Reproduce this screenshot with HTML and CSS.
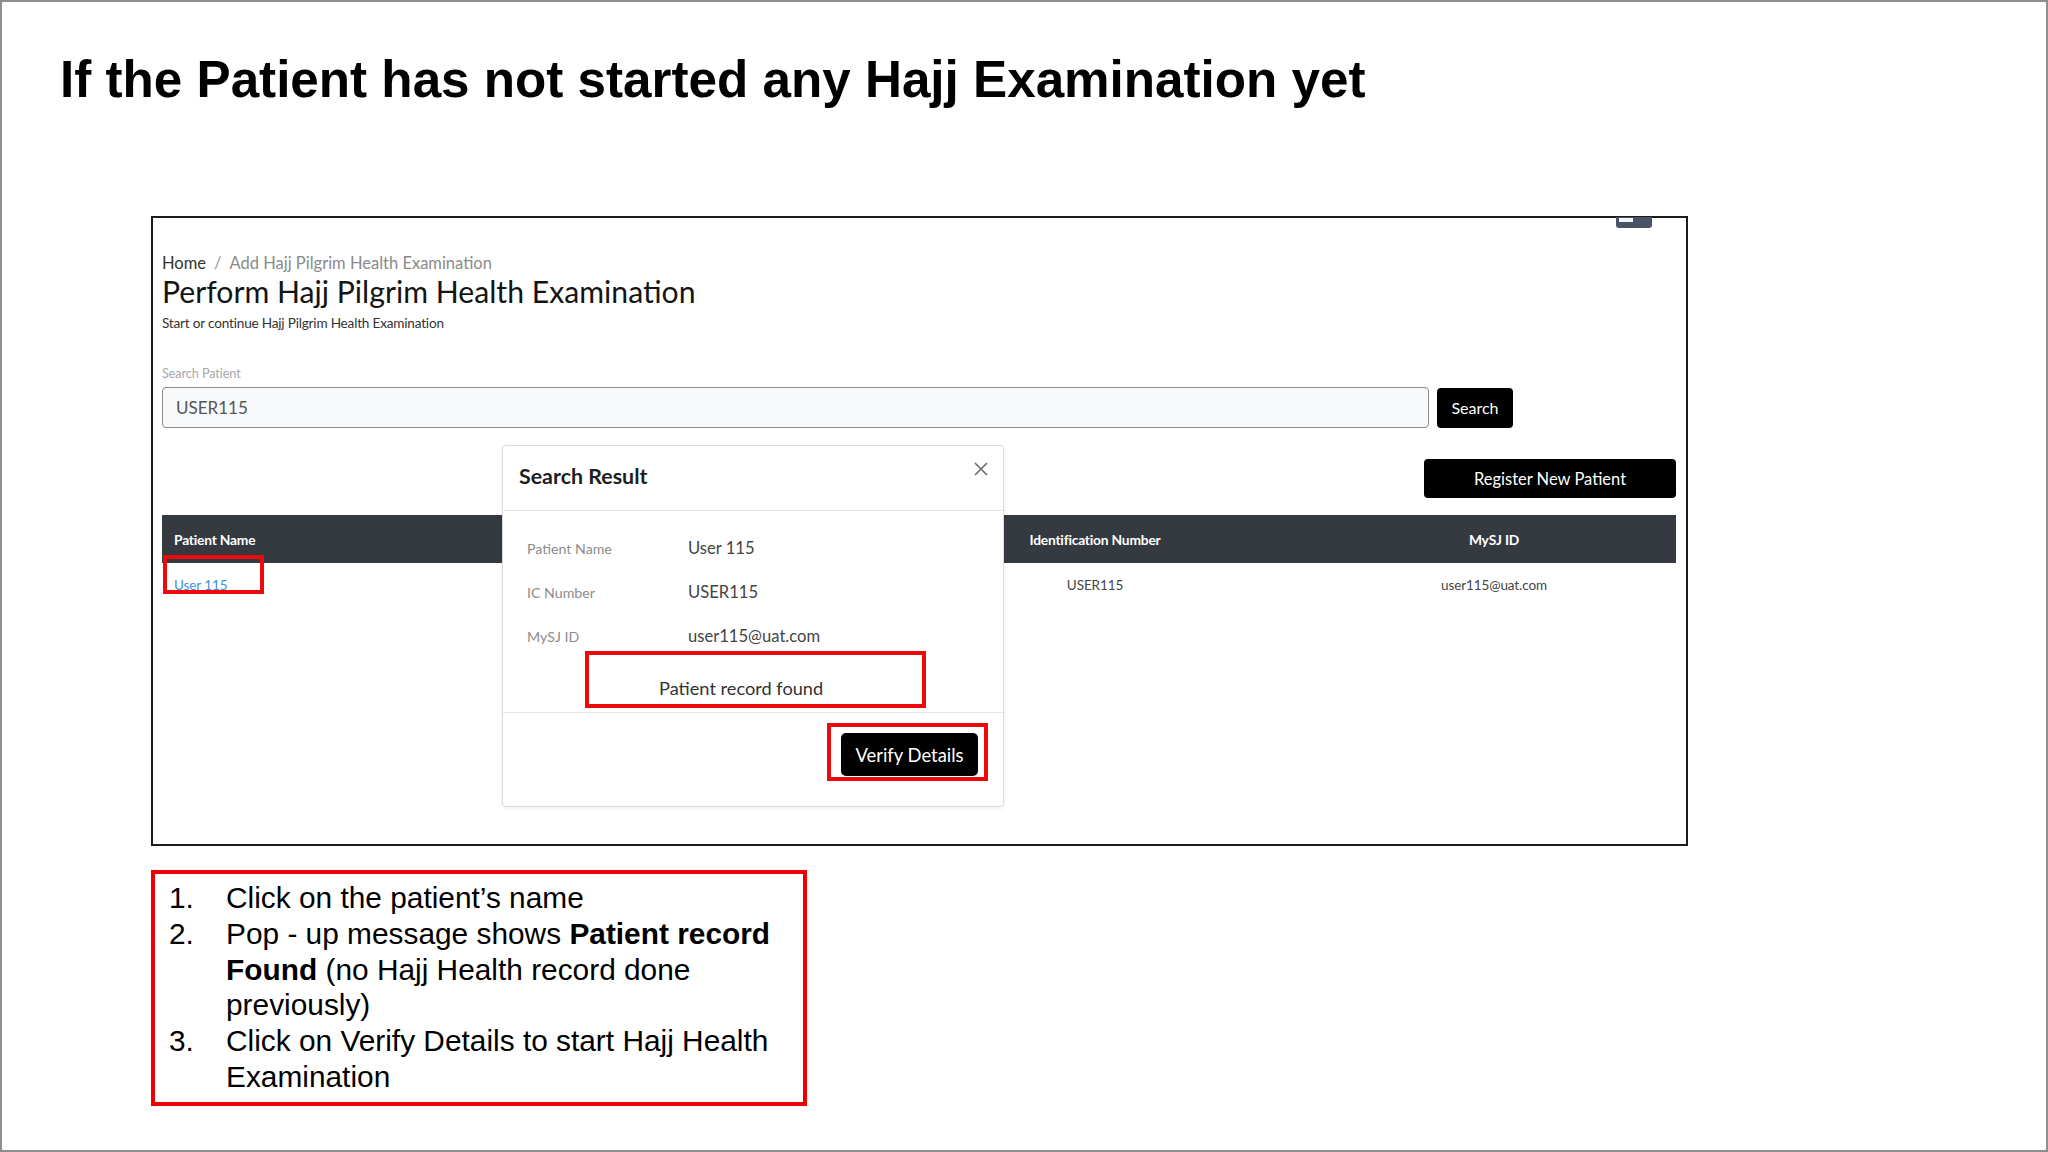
FILE: index.html
```html
<!DOCTYPE html>
<html lang="en">
<head>
<meta charset="utf-8">
<title>If the Patient has not started any Hajj Examination yet</title>
<link rel="stylesheet" href="styles.css">
</head>
<body>
<div class="slide">
  <h1 class="title">If the Patient has not started any Hajj Examination yet</h1>

  <div class="frame">
    <div class="tab"><span class="tab-bar"></span></div>
    <div class="app">
      <nav class="crumbs"><span class="crumb-home">Home</span><span class="crumb-sep">/</span><span class="crumb-cur">Add Hajj Pilgrim Health Examination</span></nav>
      <h2 class="page-title">Perform Hajj Pilgrim Health Examination</h2>
      <p class="page-sub">Start or continue Hajj Pilgrim Health Examination</p>

      <div class="field-label">Search Patient</div>
      <div class="search-row">
        <div class="search-input">USER115</div>
        <button class="btn btn-search">Search</button>
      </div>

      <div class="actions">
        <button class="btn btn-register">Register New Patient</button>
      </div>

      <div class="table">
        <div class="thead">
          <div class="cell cell-left">Patient Name</div>
          <div class="cell"></div>
          <div class="cell cell-center">Identification Number</div>
          <div class="cell cell-center">MySJ ID</div>
        </div>
        <div class="trow">
          <div class="cell cell-left"><a class="name-link">User 115</a></div>
          <div class="cell"></div>
          <div class="cell cell-center">USER115</div>
          <div class="cell cell-center">user115@uat.com</div>
        </div>
      </div>
    </div>

    <div class="hl hl-name"></div>

    <div class="modal">
      <div class="modal-head">
        <div class="modal-title">Search Result</div>
        <svg class="modal-close" width="14" height="14" viewBox="0 0 14 14"><path d="M1 1 L13 13 M13 1 L1 13" stroke="#6b6b6b" stroke-width="1.6" fill="none"/></svg>
      </div>
      <div class="modal-body">
        <div class="info-row"><span class="info-label">Patient Name</span><span class="info-value">User 115</span></div>
        <div class="info-row"><span class="info-label">IC Number</span><span class="info-value">USER115</span></div>
        <div class="info-row"><span class="info-label">MySJ ID</span><span class="info-value">user115@uat.com</span></div>
        <div class="found-box">Patient record found</div>
      </div>
      <div class="modal-foot">
        <div class="verify-wrap"><button class="btn btn-verify">Verify Details</button></div>
      </div>
    </div>
  </div>

  <div class="steps">
    <div class="step"><span class="step-num">1.</span><span class="step-text">Click on the patient’s name</span></div>
    <div class="step"><span class="step-num">2.</span><span class="step-text"><span>Pop - up message shows</span> <b>Patient record</b> <b>Found</b> <span>(no Hajj Health record done</span> <span>previously)</span></span></div>
    <div class="step"><span class="step-num">3.</span><span class="step-text"><span>Click on Verify Details to start Hajj Health</span> <span>Examination</span></span></div>
  </div>
</div>
</body>
</html>
```

FILE: styles.css
```css
* { box-sizing: border-box; }

html, body {
  margin: 0;
  padding: 0;
  background: #ffffff;
}

.slide {
  width: 2048px;
  height: 1152px;
  border: 2px solid #8e8e8e;
  background: #ffffff;
  font-family: "Liberation Sans", Arial, sans-serif;
  color: #000;
  overflow: hidden;
}

.title {
  margin: 52px 0 0 58px;
  font-family: "Liberation Sans", Arial, sans-serif;
  font-weight: 700;
  font-size: 51.2px;
  line-height: 51px;
  color: #000;
  white-space: nowrap;
}

/* ---------- embedded app screenshot ---------- */
.frame {
  position: relative;
  margin: 111px 0 0 149px;
  width: 1537px;
  height: 630px;
  border: 2px solid #1c1c1c;
  background: #fff;
  font-family: Lato, "Open Sans", sans-serif;
  color: #222;
}

.tab {
  position: absolute;
  top: -1px;
  right: 34px;
  width: 36px;
  height: 11px;
  background: #4b5367;
  border-radius: 0 0 3px 3px;
}
.tab-bar {
  display: block;
  margin: 1px 0 0 3px;
  width: 14px;
  height: 4px;
  background: #f4f4f4;
}

.app {
  padding: 35px 10px 0 9px;
}

.crumbs {
  display: flex;
  gap: 8px;
  font-size: 16.5px;
  line-height: 20px;
  color: #8a8a8a;
}
.crumb-home { color: #333; }
.crumb-sep { color: #9a9a9a; }
.crumb-cur { color: #8a8a8a; }

.page-title {
  margin: 1px 0 0 0;
  font-size: 30.2px;
  line-height: 34px;
  font-weight: 400;
  color: #141414;
}

.page-sub {
  margin: 7px 0 0 0;
  font-size: 13.6px;
  line-height: 16px;
  color: #333;
  letter-spacing: -0.2px;
}

.field-label {
  margin-top: 35px;
  font-size: 12.7px;
  line-height: 15px;
  color: #a8a8a8;
  letter-spacing: -0.1px;
}

.search-row {
  margin-top: 6px;
  display: flex;
  align-items: center;
  gap: 8px;
}
.search-input {
  width: 1267px;
  height: 41px;
  border: 1px solid #8a8a8a;
  border-radius: 4px;
  background: #f8f9fb;
  padding-left: 13px;
  font-size: 17px;
  line-height: 39px;
  color: #555;
}

.btn {
  border: none;
  background: #000;
  color: #fff;
  font-family: Lato, "Open Sans", sans-serif;
  border-radius: 4px;
  padding: 0;
  cursor: pointer;
}
.btn-search {
  width: 76px;
  height: 40px;
  font-size: 16px;
}

.actions {
  margin-top: 31px;
  display: flex;
  justify-content: flex-end;
}
.btn-register {
  width: 252px;
  height: 39px;
  font-size: 16.5px;
}

.table {
  margin-top: 17px;
}
.thead, .trow {
  display: grid;
  grid-template-columns: 398px 318px 434px 1fr;
  align-items: center;
}
.thead {
  height: 48px;
  background: #343a40;
  color: #fff;
  font-size: 13.8px;
  font-weight: 700;
  letter-spacing: -0.2px;
}
.trow {
  height: 44px;
  font-size: 13.5px;
  color: #444;
  letter-spacing: -0.1px;
}
.cell-left { padding-left: 12px; }
.cell-center { text-align: center; }

.name-link {
  color: #3f8fde;
  text-decoration: underline;
  text-decoration-color: #7fb3e8;
}

.hl {
  position: absolute;
  border: 4px solid #ee0a0a;
}
.hl-name {
  left: 10px;
  top: 337px;
  width: 101px;
  height: 39px;
}

/* ---------- modal ---------- */
.modal {
  position: absolute;
  left: 349px;
  top: 227px;
  width: 502px;
  height: 362px;
  background: #fff;
  border: 1px solid #dcdcdc;
  border-radius: 4px;
  box-shadow: 0 1px 4px rgba(0, 0, 0, 0.08);
}

.modal-head {
  position: relative;
  padding: 18px 16px 22px 16px;
  border-bottom: 1px solid #e6e6e6;
}
.modal-title {
  font-size: 21.4px;
  line-height: 24px;
  font-weight: 700;
  color: #1e1e1e;
}
.modal-close {
  position: absolute;
  right: 15px;
  top: 16px;
}

.modal-body {
  padding-top: 15px;
}
.info-row {
  display: grid;
  grid-template-columns: 161px 1fr;
  align-items: baseline;
  padding-left: 24px;
  height: 44px;
  line-height: 44px;
}
.info-label {
  font-size: 14.2px;
  color: #8c8c8c;
}
.info-value {
  font-size: 16.6px;
  color: #444;
}

.found-box {
  margin: -7px 0 4px 82px;
  width: 341px;
  height: 57px;
  border: 4px solid #ee0a0a;
  padding: 21px 0 0 70px;
  font-size: 18.2px;
  line-height: 24px;
  color: #333;
}

.modal-foot {
  border-top: 1px solid #e6e6e6;
  padding: 10px 15px 0 0;
  display: flex;
  justify-content: flex-end;
}
.verify-wrap {
  border: 4px solid #ee0a0a;
  padding: 6px 6px 1px 10px;
}
.btn-verify {
  display: block;
  width: 137px;
  height: 43px;
  border-radius: 5px;
  font-size: 18.4px;
}

/* ---------- instructions box ---------- */
.steps {
  margin: 24px 0 0 149px;
  width: 656px;
  height: 236px;
  border: 4px solid #f00000;
  padding: 6px 0 0 14px;
}
.step {
  display: grid;
  grid-template-columns: 57px 1fr;
  font-size: 29.85px;
  line-height: 35.8px;
  color: #000;
}
.step-text {
  padding-right: 20px;
}
.step-text b { font-weight: 700; }
```
